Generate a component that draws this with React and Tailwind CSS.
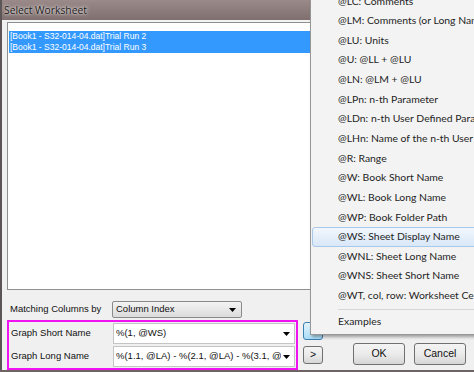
import React from "react";

const menuItems = [
  "@LC: Comments",
  "@LM: Comments (or Long Name)",
  "@LU: Units",
  "@U: @LL + @LU",
  "@LN: @LM + @LU",
  "@LPn: n-th Parameter",
  "@LDn: n-th User Defined Parameter",
  "@LHn: Name of the n-th User Parameter",
  "@R: Range",
  "@W: Book Short Name",
  "@WL: Book Long Name",
  "@WP: Book Folder Path",
  "@WS: Sheet Display Name",
  "@WNL: Sheet Long Name",
  "@WNS: Sheet Short Name",
  "@WT, col, row: Worksheet Cell",
];

function Arrow() {
  return (
    <svg width="7" height="4" viewBox="0 0 7 4" className="shrink-0">
      <path d="M0 0 H7 L3.5 4 Z" fill="#000" />
    </svg>
  );
}

function WinButton({ children, className = "" }) {
  return (
    <div
      className={
        "flex items-center justify-center rounded-[3px] border border-[#707070] bg-gradient-to-b from-[#f4f4f4] via-[#ebebeb] to-[#d6d6d6] text-[10.5px] text-[#111] " +
        className
      }
      style={{ fontFamily: "'Liberation Sans', Arial, sans-serif" }}
    >
      {children}
    </div>
  );
}

export default function App() {
  return (
    <div
      className="relative flex h-[372px] w-[474px] overflow-hidden bg-[#f0f0f0]"
      style={{ fontFamily: "'Liberation Sans', Arial, sans-serif" }}
    >
      {/* left frame */}
      <div className="w-[2px] shrink-0 bg-[#5b5556]" />
      <div className="flex min-w-0 flex-1 flex-col">
        {/* title bar */}
        <div className="flex h-[20px] shrink-0 items-center bg-gradient-to-b from-[#9a8b8a] to-[#7f706f] pl-[2px]">
          <span
            className="text-[10.3px] leading-none text-[#1a1a1a]"
            style={{
              fontFamily: "'Open Sans', 'Noto Sans', sans-serif",
              textShadow: "0 0 4px #e9e2e2, 0 0 2px #e9e2e2",
            }}
          >
            Select Worksheet
          </span>
        </div>
        <div className="h-[2px] shrink-0 bg-[#f3f3f3]" />
        {/* list box */}
        <div className="ml-[5px] h-[268px] w-[320px] shrink-0 border border-[#8e8f8f] bg-white pt-[8px]">
          <div className="ml-[1px] bg-[#3399ff] text-[8.5px] leading-[11px] text-white">
            <div className="h-[11px] pl-[1px]">[Book1 - S32-014-04.dat]Trial Run 2</div>
            <div className="h-[11px] pl-[1px]">[Book1 - S32-014-04.dat]Trial Run 3</div>
          </div>
        </div>
        {/* matching columns */}
        <div className="mt-[11px] flex h-[17px] shrink-0 items-center">
          <span className="ml-[8px] w-[102px] whitespace-nowrap text-[9.5px] text-[#111]">Matching Columns by</span>
          <div className="flex h-[17px] w-[130px] items-center justify-between rounded-[2px] border border-[#8a8a8a] bg-gradient-to-b from-[#f3f3f3] to-[#dcdcdc] pl-[3px] pr-[5px]">
            <span className="text-[9.5px] text-[#111]">Column Index</span>
            <Arrow />
          </div>
        </div>
        {/* bottom row */}
        <div className="mt-[2px] flex shrink-0 items-start">
          <div className="ml-[5px] flex h-[50px] w-[291px] flex-col justify-center gap-[2px] border-[2px] border-[#f012f0] pr-[1px]">
            <div className="flex h-[21px] items-center">
              <span className="ml-[2px] w-[102px] whitespace-nowrap text-[9.5px] text-[#111]">Graph Short Name</span>
              <div className="flex h-[21px] flex-1 items-center justify-between border border-[#c4c4c4] bg-white pl-[2px] pr-[4px]">
                <span className="text-[9.5px] text-[#111]">%(1, @WS)</span>
                <Arrow />
              </div>
            </div>
            <div className="flex h-[21px] items-center">
              <span className="ml-[2px] w-[102px] whitespace-nowrap text-[9.5px] text-[#111]">Graph Long Name</span>
              <div className="flex h-[21px] min-w-0 flex-1 items-center justify-between overflow-hidden border border-[#c4c4c4] bg-white pl-[2px] pr-[4px]">
                <span className="min-w-0 overflow-hidden whitespace-nowrap text-[9.5px] text-[#111]">
                  %(1.1, @LA) - %(2.1, @LA) - %(3.1, @LU
                </span>
                <span className="ml-[2px] flex bg-white">
                  <Arrow />
                </span>
              </div>
            </div>
          </div>
          <div className="ml-[5px] flex flex-col gap-[6px] pt-[2px]">
            <div className="h-[18px] w-[20px] rounded-[3px] border border-[#3c7fb1] bg-gradient-to-b from-[#e5f4fc] to-[#a9dbf6]" />
            <WinButton className="h-[18px] w-[20px]">&gt;</WinButton>
          </div>
          <div className="ml-[30px] mt-[23px] flex gap-[9px]">
            <WinButton className="h-[22px] w-[52px]">OK</WinButton>
            <WinButton className="h-[22px] w-[52px]">Cancel</WinButton>
          </div>
        </div>
      </div>
      {/* bottom frame */}
      <div className="absolute bottom-0 left-0 h-[2px] w-full bg-[#6e6463]" />

      {/* popup menu */}
      <div
        className="absolute left-[310px] top-[-9.5px] w-[200px] border border-[#979797] bg-[#f3f3f3] pb-[3px] shadow-[2px_2px_3px_rgba(0,0,0,0.35)]"
        style={{ fontFamily: "Lato, 'Open Sans', sans-serif" }}
      >
        {menuItems.map((t) => {
          const active = t.startsWith("@WS:");
          return (
            <div
              key={t}
              className={
                "mx-[1px] flex h-[19.65px] items-center whitespace-nowrap rounded-[3px] pl-[25px] text-[10.4px] text-[#1e1e1e] " +
                (active
                  ? "border border-[#a8c8ec] bg-gradient-to-b from-[#f2f7fd] to-[#d9e7f8]"
                  : "border border-transparent")
              }
            >
              {t}
            </div>
          );
        })}
        <div className="flex h-[8px] items-center pl-[27px]">
          <div className="h-[1px] w-full bg-[#d7d7d7]" />
        </div>
        <div className="mx-[1px] flex h-[17px] items-center border border-transparent pl-[25px] text-[10.4px] text-[#1e1e1e]">
          Examples
        </div>
      </div>
    </div>
  );
}
